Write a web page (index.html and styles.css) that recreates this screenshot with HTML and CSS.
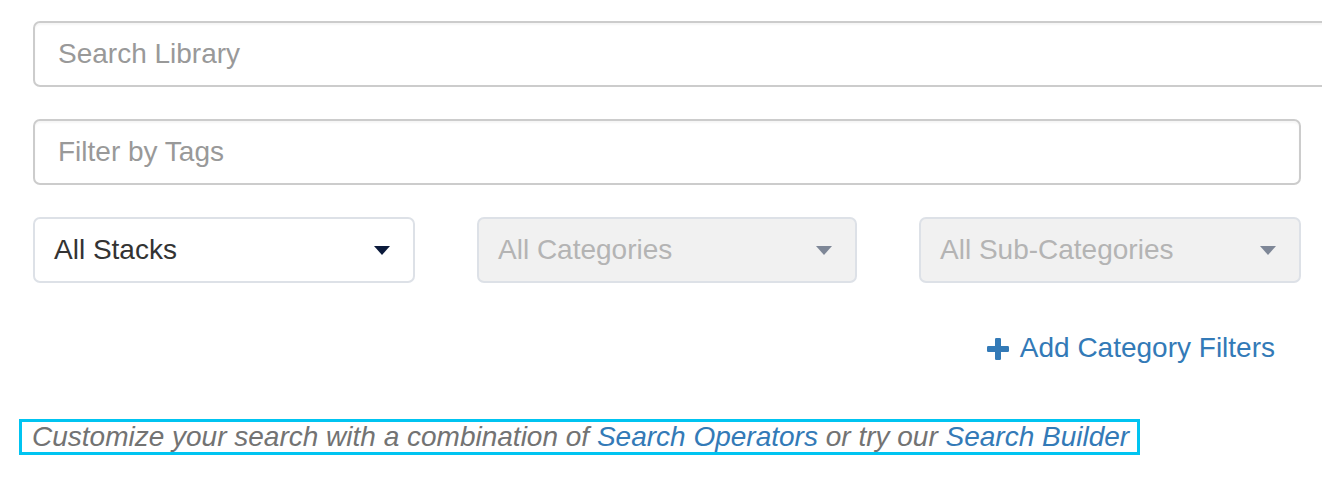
FILE: index.html
```html
<!DOCTYPE html>
<html>
<head>
<meta charset="utf-8">
<link rel="stylesheet" href="styles.css">
</head>
<body>
<div class="page">
  <div class="field field-wide"><span class="placeholder">Search Library</span></div>
  <div class="field"><span class="placeholder">Filter by Tags</span></div>
  <div class="selects">
    <div class="select">
      <span>All Stacks</span>
      <svg class="caret" width="16" height="9" viewBox="0 0 16 9"><path d="M0 0H16L8 9Z" fill="#0b1a3b"/></svg>
    </div>
    <div class="select disabled">
      <span>All Categories</span>
      <svg class="caret" width="16" height="9" viewBox="0 0 16 9"><path d="M0 0H16L8 9Z" fill="#7e8797"/></svg>
    </div>
    <div class="select disabled">
      <span>All Sub-Categories</span>
      <svg class="caret" width="16" height="9" viewBox="0 0 16 9"><path d="M0 0H16L8 9Z" fill="#7e8797"/></svg>
    </div>
  </div>
  <div class="add-row">
    <a class="add-link">
      <svg class="plus" width="22" height="22" viewBox="0 0 22 22"><rect x="8" y="0" width="6" height="22" rx="1.2" fill="#337ab7"/><rect x="0" y="8" width="22" height="6" rx="1.2" fill="#337ab7"/></svg>
      <span>Add Category Filters</span>
    </a>
  </div>
  <div class="hint-row">
    <p class="hint">Customize your search with a combination of <a>Search Operators</a> or try our <a>Search Builder</a></p>
  </div>
</div>
</body>
</html>
```

FILE: styles.css
```css
html, body {
  margin: 0;
  padding: 0;
  background: #ffffff;
  overflow: hidden;
}
body {
  font-family: "Liberation Sans", Arial, sans-serif;
  width: 1322px;
  height: 490px;
}
.page {
  padding: 21px 0 0 33px;
  width: 1268px;
}
.field {
  box-sizing: border-box;
  height: 66px;
  border: 2px solid #cccccc;
  border-radius: 7px;
  display: flex;
  align-items: center;
  padding-left: 23px;
  margin-bottom: 32px;
  font-size: 28px;
  box-shadow: inset 0 2px 2px rgba(0,0,0,0.04);
}
.field-wide {
  width: 1320px;
}
.placeholder {
  color: #999999;
}
.selects {
  display: grid;
  grid-template-columns: 382px 380px 382px;
  column-gap: 62px;
}
.select {
  box-sizing: border-box;
  height: 66px;
  border: 2px solid #dde1e7;
  border-radius: 7px;
  display: flex;
  align-items: center;
  justify-content: space-between;
  padding: 0 23px 0 19px;
  font-size: 28px;
  color: #333333;
  background: #ffffff;
}
.select.disabled {
  background: #f1f1f1;
  color: #b4b4b4;
  padding-right: 23px;
}
.caret {
  display: block;
  margin-top: 1px;
}
.add-row {
  display: flex;
  justify-content: flex-end;
  padding: 49px 26px 0 0;
}
.add-link {
  display: flex;
  align-items: center;
  gap: 11px;
  color: #337ab7;
  font-size: 28px;
  line-height: 32px;
}
.plus {
  display: block;
  margin-top: 1px;
}
.hint-row {
  padding: 55px 0 0 0;
  margin-left: -14px;
}
.hint {
  display: inline-block;
  margin: 0;
  box-sizing: border-box;
  border: 3px solid #00c4f1;
  padding: 0 8px 0 10px;
  font-style: italic;
  font-size: 28px;
  line-height: 30px;
  color: #737373;
}
.hint a {
  color: #337ab7;
}
```
